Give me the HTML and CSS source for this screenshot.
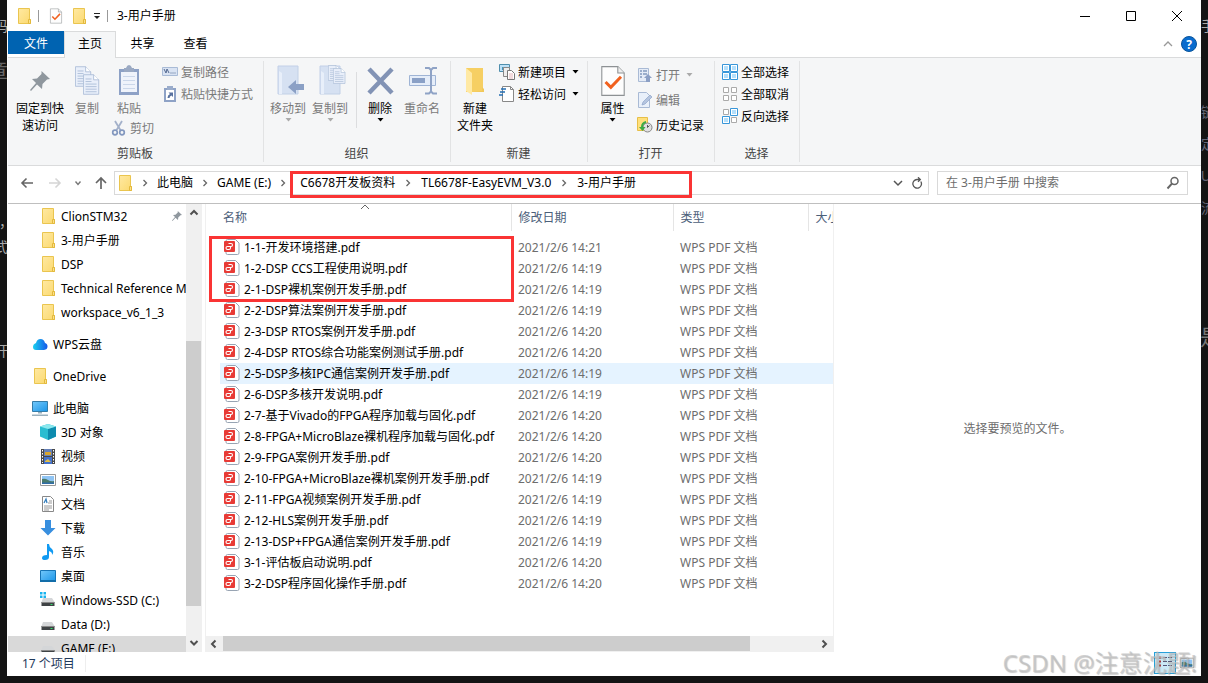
FILE: index.html
```html
<!DOCTYPE html>
<html lang="zh-CN">
<head>
<meta charset="utf-8">
<title>3-用户手册</title>
<link rel="stylesheet" href="styles.css">
</head>
<body>
<svg class="defs" aria-hidden="true">
  <defs>
    <linearGradient id="gf" x1="0" y1="0" x2="1" y2="1"><stop offset="0" stop-color="#ffe9a2"/><stop offset="1" stop-color="#fbd96f"/></linearGradient>
    <linearGradient id="gb" x1="0" y1="0" x2="1" y2="1"><stop offset="0" stop-color="#73c8fa"/><stop offset="1" stop-color="#1a95e8"/></linearGradient>
    <linearGradient id="gc" x1="0" y1="0" x2="1" y2="0"><stop offset="0" stop-color="#1ad0ee"/><stop offset="1" stop-color="#1557ea"/></linearGradient>
  </defs>
  <symbol id="folder" viewBox="0 0 16 16"><path d="M2.5.5h11v11h1v4h-12z" fill="url(#gf)" stroke="#eac54f"/><path d="M12.5 15.5v-4h2v4z" fill="#fbe08c" stroke="#e3b93c"/></symbol>
  <symbol id="pdf" viewBox="0 0 16 16"><path d="M3.500.5h8l3.500 3.500v10q0 1.500-1.500 1.500h-10q-1.500 0-1.500-1.500V2q0-1.500 1.500-1.500z" fill="#fff" stroke="#98a4b3"/><rect y="2" width="11" height="11" rx="1" fill="#e83b36"/><path d="M4.500 4.500H7q1.500 0 1.500 1.500T7 7.500H3.500q-1.500 0-1.500 1.500t1.500 1.500H5q1.500 0 1.500-1.500V7" fill="none" stroke="#fff" stroke-width="1.100"/></symbol>
  <symbol id="pin" viewBox="0 0 24 24"><path d="M13.500 2L22 10l-3 .5-4.500 4.500-.5 5-5-4.500L3 22l-1-1 6-7-4-4 5-.5L13.500 5z" fill="#8f979e"/></symbol>
  <symbol id="drive" viewBox="0 0 16 16"><path d="M3 6h9l2.500 4h-13z" fill="#d4d6d8"/><path d="M1.500 10h13v4h-13z" fill="#3f4345"/><path d="M1.500 10h13v1h-13z" fill="#888"/><path d="M10.500 12h2v1h-2z" fill="#35e06b"/></symbol>
  <symbol id="chev" viewBox="0 0 8 8"><path d="M2.500 1l3 3-3 3" fill="none" stroke="#666" stroke-width="1.300"/></symbol>
  <symbol id="tri" viewBox="0 0 7 4"><path d="M.5 0h6l-3 3.500z" fill="currentColor"/></symbol>
  <symbol id="doc" viewBox="0 0 20 24"><path d="M.5.5h12l6 6v17H.5z" fill="#e9effa" stroke="#a9bbd6"/><path d="M12.500.5v6h6" fill="#fff" stroke="#a9bbd6"/><path d="M3 5.500h7M3 8.500h7M3 11.500h13M3 14.500h13M3 17.500h13M3 20.500h13" stroke="#a9bbd6"/></symbol>
  <symbol id="check" viewBox="0 0 24 30"><path d="M1.500 1.500h15l6 6v21h-21z" fill="#fdfdfd" stroke="#8d9194"/><path d="M16.500 1.500v6h6" fill="#eee" stroke="#8d9194"/><path d="M5 16l5 5 9.500-10" fill="none" stroke="#f1611f" stroke-width="2.800"/></symbol>
  <symbol id="picture" viewBox="0 0 16 14"><path d="M.5 1.500h15v11H.5z" fill="#fff" stroke="#999"/><path d="M2 3h12v8H2z" fill="#8fc4f4"/><path d="M2 6q3-1 6 1t6 1v3H2z" fill="#4a7b6d"/><path d="M2 9.500h12V11H2z" fill="#2f6da8"/></symbol>
</svg>

<div class="backdrop" aria-hidden="true">
  <span class="bit b1">码</span><span class="bit b2">章</span><span class="bit b3">，</span><span class="bit b4">式</span><span class="bit b5">开</span>
  <span class="bit r1">手</span><span class="bit r2">链</span><span class="bit r3">定</span><span class="bit r4">U</span><span class="bit r5">流</span><span class="bit r6">是</span>
</div>

<div class="window">
  <header class="titlebar">
    <svg class="i16"><use href="#folder"/></svg>
    <span class="bar"></span>
    <svg class="i16"><use href="#check"/></svg>
    <svg class="i16 second"><use href="#folder"/></svg>
    <svg class="custom" viewBox="0 0 8 8"><path d="M1 1.500h6" stroke="#222"/><path d="M1 4h6L4 7z" fill="#222"/></svg>
    <span class="bar"></span>
    <h1 class="title">3-用户手册</h1>
    <div class="controls">
      <button aria-label="最小化"><svg viewBox="0 0 12 12"><path d="M1 6.500h10" stroke="#000"/></svg></button>
      <button aria-label="最大化"><svg viewBox="0 0 12 12"><path d="M1.500 1.500h9v9h-9z" stroke="#000" fill="none"/></svg></button>
      <button aria-label="关闭"><svg viewBox="0 0 12 12"><path d="M1 1l10 10M11 1L1 11" stroke="#000"/></svg></button>
    </div>
  </header>

  <nav class="tabs">
    <button class="tab file">文件</button>
    <button class="tab active">主页</button>
    <button class="tab">共享</button>
    <button class="tab">查看</button>
    <div class="tabs-end">
      <button aria-label="折叠功能区"><svg class="fold" viewBox="0 0 10 6"><path d="M1 5l4-4 4 4" fill="none" stroke="#999" stroke-width="1.300"/></svg></button>
      <button class="help" aria-label="帮助">?</button>
    </div>
  </nav>

  <section class="ribbon">
    <div class="group clip">
      <div class="tools">
        <button class="big pinbtn"><svg class="i32" viewBox="-4 -3 32 32"><use href="#pin" x="0" y="1" width="24" height="24"/></svg>固定到快<br>速访问</button>
        <button class="big off copy"><svg class="i32" viewBox="0 0 32 32"><use href="#doc" x="4" y="1" width="17" height="21"/><use href="#doc" x="12" y="9" width="17" height="21"/></svg>复制</button>
        <div class="pastecol">
          <button class="big off"><svg class="i32" viewBox="0 0 32 32"><path d="M6 4h20v26H6z" fill="#8da1c6"/><path d="M8 7h16v20H8z" fill="#eff3fb"/><path d="M10 11.500h12M10 15.500h12M10 19.500h12M10 23.500h12" stroke="#cbd7ea"/><path d="M11 3h2q1-3 3-3t3 3h2v4H11z" fill="#9aa9c3"/></svg>粘贴</button>
          <button class="small off"><svg class="i16" viewBox="0 0 16 16"><path d="M4 1l6 10M11 1L5 11" stroke="#a3b1ca" stroke-width="1.800"/><g fill="none" stroke="#8398bf" stroke-width="1.700"><circle cx="4" cy="12.500" r="2.300"/><circle cx="11" cy="12.500" r="2.300"/></g></svg>剪切</button>
        </div>
        <div class="stack s22">
          <button class="small off"><svg class="i16" viewBox="0 0 16 16"><path d="M.5 3.500h15v8H.5z" fill="#d9e3f3" stroke="#a9bbd6"/><path d="M2 5l2 4 1-4 2 4" fill="none" stroke="#53688f"/><path d="M8.500 9h1M10.500 9h1M12.500 9h1" stroke="#53688f"/></svg>复制路径</button>
          <button class="small off"><svg class="i16" viewBox="0 0 16 16"><path d="M2 2h12v14H2z" fill="#8ea2c6"/><path d="M4 4h8v10H4z" fill="#fff"/><path d="M5 0h6v4H5z" fill="#9aaccb"/><path d="M5.500 12q0-3 2.500-4L6.500 6.500H11V11L9.500 9.500Q7.500 10 7.500 12z" fill="#58719e"/></svg>粘贴快捷方式</button>
        </div>
      </div>
      <div class="caption">剪贴板</div>
    </div>
    <div class="group org">
      <div class="tools">
        <button class="big off"><svg class="i32" viewBox="0 0 32 32"><path d="M6 1h20v28H6z" fill="#d6e1f2" stroke="#c2d0e7"/><path d="M7 29V6l3 2v21z" fill="#e8effa"/><path d="M32 19v6h-8v4l-8-7 8-7v4z" fill="#8ba0c5"/></svg>移动到<svg class="tri"><use href="#tri"/></svg></button>
        <button class="big off"><svg class="i32" viewBox="0 0 32 32"><path d="M6 1h20v28H6z" fill="#d6e1f2" stroke="#c2d0e7"/><path d="M7 29V6l3 2v21z" fill="#e8effa"/><use href="#doc" x="14" y="0" width="13" height="16"/><use href="#doc" x="19" y="3" width="13" height="16"/></svg>复制到<svg class="tri"><use href="#tri"/></svg></button>
        <span class="rule"></span>
        <button class="big"><svg class="i32" viewBox="0 0 32 32"><path d="M5 4l23 24M28 4L5 28" stroke="#8293b5" stroke-width="4.500"/></svg>删除<svg class="tri"><use href="#tri"/></svg></button>
        <button class="big off"><svg class="i32" viewBox="0 0 32 32"><path d="M3.500 10.500h26v10h-26z" fill="#e5edf9" stroke="#9fb4d5"/><path d="M6 13h13v5H6z" fill="#8aa0c6"/><path d="M19 3h4l2 2 2-2h4M25 4v24M19 28.500h4l2-2 2 2h4" fill="none" stroke="#8fa3c6" stroke-width="2"/></svg>重命名</button>
      </div>
      <div class="caption">组织</div>
    </div>
    <div class="group new">
      <div class="tools">
        <button class="big"><svg class="i32" viewBox="0 0 32 32"><path d="M7 3h17v24H7z" fill="#f6cf63"/><path d="M7 3l6 5v22l-6-4z" fill="#ffe9a4"/><path d="M13 27h12v-3l-2-2v4z" fill="#f1c85a"/></svg>新建<br>文件夹</button>
        <div class="stack s22">
          <button class="small"><svg class="i16" viewBox="0 0 16 16"><path d="M.5.5h10v7H.5z" fill="#bce1f8" stroke="#4e8ead"/><path d="M3 3h4v3H3z" fill="#4194bc"/><path d="M4.500 3.500h6v9h-6z" fill="#eee" stroke="#888"/><path d="M8.500 6.500h4l3 3v6h-7z" fill="#fff" stroke="#777"/><path d="M10 10h4M10 12h4M10 14h4" stroke="#e4b5ba"/></svg>新建项目<svg class="tri side"><use href="#tri"/></svg></button>
          <button class="small"><svg class="i16" viewBox="0 0 16 16"><path d="M3.500.5h8l3 3v12h-11z" fill="#fff" stroke="#888"/><path d="M11.500.5v3h3" fill="none" stroke="#888"/><path d="M2 3h5M1 6h5M0 9h4" stroke="#246fb4" stroke-width="1.400"/></svg>轻松访问<svg class="tri side"><use href="#tri"/></svg></button>
        </div>
      </div>
      <div class="caption">新建</div>
    </div>
    <div class="group open">
      <div class="tools">
        <button class="big"><svg class="i32"><use href="#check"/></svg>属性<svg class="tri"><use href="#tri"/></svg></button>
        <div class="stack s25">
          <button class="small off"><svg class="i16" viewBox="0 0 16 16"><path d="M1.500 1.500h10v13h-10z" fill="#e5ecf7" stroke="#a9bad5"/><path d="M3 4h2M3 7h2M3 10h2M6 4h4M6 7h4" stroke="#849abf" stroke-width="1.500"/><path d="M11 7l4 4h-2v4H9v-4H7z" fill="#8ca0c5"/></svg>打开<svg class="tri side"><use href="#tri"/></svg></button>
          <button class="small off"><svg class="i16" viewBox="0 0 16 16"><path d="M1.500.5h8l3 3v12h-11z" fill="#e9f0fa" stroke="#a9bad5"/><path d="M5 13l1-3 7-7 2 2-7 7z" fill="#b5c5df" stroke="#8fa5ca" stroke-width=".7"/></svg>编辑</button>
          <button class="small"><svg class="i16" viewBox="0 0 16 16"><path d="M.5.5h10v13H.5z" fill="#ffe07c" stroke="#e7bf48"/><circle cx="10.500" cy="10.500" r="4.500" fill="#e1e1e1" stroke="#858585"/><path d="M10.500 10.500V8M10.500 10.500l2-2" fill="none" stroke="#555"/><path d="M9 4q-5 1-5 6H2l3.500 4 3-4H6q0-3 3-4z" fill="#3cab45"/></svg>历史记录</button>
        </div>
      </div>
      <div class="caption">打开</div>
    </div>
    <div class="group pick">
      <div class="tools">
        <div class="stack s22">
          <button class="small"><svg class="i16" viewBox="0 0 16 16"><path d="M.5.500h7v7h-7zM8.500.500h7v7h-7zM.5 8.500h7v7h-7zM8.500 8.500h7v7h-7z" fill="#fff" stroke="#3896d9"/><path d="M2 2h4v4H2zM10 2h4v4h-4zM2 10h4v4H2zM10 10h4v4h-4z" fill="#b4dffb"/></svg>全部选择</button>
          <button class="small"><svg class="i16" viewBox="0 0 16 16"><path d="M1.500 1.500h5v5h-5zM9.500 1.500h5v5h-5zM1.500 9.500h5v5h-5zM9.500 9.500h5v5h-5z" fill="#fff" stroke="#aaa"/></svg>全部取消</button>
          <button class="small"><svg class="i16" viewBox="0 0 16 16"><path d="M1.500 1.500h5v5h-5zM9.500 9.500h5v5h-5z" fill="#fff" stroke="#aaa"/><path d="M8.500.500h7v7h-7zM.5 8.500h7v7h-7z" fill="#fff" stroke="#3896d9"/><path d="M10 2h4v4h-4zM2 10h4v4H2z" fill="#b4dffb"/></svg>反向选择</button>
        </div>
      </div>
      <div class="caption">选择</div>
    </div>
  </section>

  <div class="addressbar">
    <div class="nav">
      <button aria-label="后退"><svg class="i14" viewBox="0 0 14 14"><path d="M13 7H2M6.500 2.500L2 7l4.500 4.500" fill="none" stroke="#666" stroke-width="1.600"/></svg></button>
      <button aria-label="前进"><svg class="i14" viewBox="0 0 14 14"><path d="M1 7h11M7.500 2.500L12 7l-4.500 4.500" fill="none" stroke="#d5d5d5" stroke-width="1.600"/></svg></button>
      <button aria-label="最近"><svg class="i8" viewBox="0 0 8 8"><path d="M1.500 2.500l2.500 3 2.500-3" fill="none" stroke="#777" stroke-width="1.400"/></svg></button>
      <button aria-label="向上"><svg class="i14" viewBox="0 0 14 14"><path d="M7 13V2M2 7l5-5 5 5" fill="none" stroke="#666" stroke-width="1.700"/></svg></button>
    </div>
    <div class="path">
      <svg class="i16"><use href="#folder"/></svg>
      <svg class="i8"><use href="#chev"/></svg><a href="#">此电脑</a>
      <svg class="i8"><use href="#chev"/></svg><a href="#">GAME (E:)</a>
      <svg class="i8"><use href="#chev"/></svg>
      <div class="trail"><a href="#">C6678开发板资料</a>
      <svg class="i8"><use href="#chev"/></svg><a href="#">TL6678F-EasyEVM_V3.0</a>
      <svg class="i8"><use href="#chev"/></svg><a href="#">3-用户手册</a><span class="mark mark-path"></span></div>
      <div class="path-end">
        <button aria-label="历史"><svg class="i10" viewBox="0 0 10 10"><path d="M1 3l4 4 4-4" fill="none" stroke="#555" stroke-width="1.500"/></svg></button>
        <button aria-label="刷新"><svg class="i12" viewBox="0 0 12 12"><path d="M9.800 4.500A4.300 4.300 0 1 1 6 2.500H9M7 .3l2.300 2.200L7 4.700" fill="none" stroke="#555" stroke-width="1.300"/></svg></button>
      </div>
    </div>
    <label class="search"><input type="text" placeholder="在 3-用户手册 中搜索" aria-label="搜索"><svg class="i14" viewBox="0 0 14 14"><circle cx="8.500" cy="5" r="3.500" fill="none" stroke="#666" stroke-width="1.500"/><path d="M6 7.500L1.500 12.500" stroke="#666" stroke-width="1.900"/></svg></label>
  </div>

  <main class="main">
    <aside class="tree">
      <ul class="nodes sub">
        <li><svg class="i16"><use href="#folder"/></svg>ClionSTM32<svg class="pinned"><use href="#pin"/></svg></li>
        <li><svg class="i16"><use href="#folder"/></svg>3-用户手册</li>
        <li><svg class="i16"><use href="#folder"/></svg>DSP</li>
        <li><svg class="i16"><use href="#folder"/></svg>Technical Reference Manual</li>
        <li><svg class="i16"><use href="#folder"/></svg>workspace_v6_1_3</li>
      </ul>
      <ul class="nodes"><li><svg class="i16" viewBox="0 0 16 16"><path d="M4 14q-3 0-3-3t3-4q1-4 4.500-4T13 7q2.500.5 2.500 3.500T12 14z" fill="url(#gc)"/></svg>WPS云盘</li></ul>
      <ul class="nodes"><li><svg class="i16"><use href="#folder"/></svg>OneDrive</li></ul>
      <ul class="nodes"><li><svg class="i16" viewBox="0 0 16 16"><path d="M.5 1.500h15v10H.5z" fill="url(#gb)" stroke="#347ca8"/><path d="M6 12h4v1.500H6zM0 14.500h16V16H0z" fill="#9ab0bd"/></svg>此电脑</li></ul>
      <ul class="nodes sub flush">
        <li><svg class="i16" viewBox="0 0 16 16"><path d="M8 0l8 2.500v10L8 16l-8-3.500v-10z" fill="#2abdd1"/><path d="M8 5l8-2.500v10L8 16z" fill="#0d8bae"/><path d="M8 0l8 2.500L8 5 0 2.500z" fill="#8be8ee"/></svg>3D 对象</li>
        <li><svg class="i16" viewBox="0 0 16 16"><path d="M1 1h14v15H1z" fill="#484848"/><path d="M4 1h8v7H4z" fill="#6681b8"/><path d="M4 9h8v7H4z" fill="#4372cc"/><path d="M5 4h6v3H5z" fill="#d9a62e"/><path d="M5 13l3-2 3 3H5z" fill="#e2bd48"/><path d="M2.500 2v13M13.500 2v13" stroke="#fff" stroke-dasharray="1.500 1.500"/></svg>视频</li>
        <li><svg class="i16"><use href="#picture"/></svg>图片</li>
        <li><svg class="i16" viewBox="0 0 16 16"><path d="M2.500.5h8l3 3v12h-11z" fill="#fff" stroke="#888"/><path d="M4 10h8M4 12h8M4 14h5M8 7h4M9 5h3" stroke="#999"/><path d="M4 7l2-4 1 4" fill="none" stroke="#3680be" stroke-width="1.300"/></svg>文档</li>
        <li><svg class="i16" viewBox="0 0 16 16"><path d="M5 0h6v8h4.500L8 15.500.5 8H5z" fill="#388fdf"/></svg>下载</li>
        <li><svg class="i16" viewBox="0 0 16 16"><path d="M7 0h2q0 3 3 5 2.500 3 0 6 .5-3-3-4v6q0 3-4 3-3 0-3-2 0-3 5-3z" fill="#119af2"/></svg>音乐</li>
        <li><svg class="i16" viewBox="0 0 16 16"><path d="M.5 2.500h15v11H.5z" fill="url(#gb)" stroke="#1674b5"/><path d="M0 12h16v2H0z" fill="#126da9"/></svg>桌面</li>
        <li><svg class="i16" viewBox="0 0 16 16"><use href="#drive" width="16" height="16"/><path d="M0 0h2.500v2.500H0zM3.500 0H6v2.500H3.500zM0 3.500h2.500V6H0zM3.500 3.500H6V6H3.500z" fill="#19b4ef"/></svg>Windows-SSD (C:)</li>
        <li><svg class="i16"><use href="#drive"/></svg>Data (D:)</li>
        <li class="current"><svg class="i16"><use href="#drive"/></svg>GAME (E:)</li>
      </ul>
    </aside>
    <div class="vscroll">
      <svg class="i10" viewBox="0 0 10 10"><path d="M1.500 6.500L5 3l3.500 3.500" fill="none" stroke="#505050" stroke-width="2"/></svg>
      <div class="vtrack"><span class="vthumb"></span></div>
      <svg class="i10" viewBox="0 0 10 10"><path d="M1.500 3L5 6.500 8.500 3" fill="none" stroke="#505050" stroke-width="2"/></svg>
    </div>

    <section class="files">
      <svg class="sort" viewBox="0 0 10 6"><path d="M1 5l4-4 4 4" fill="none" stroke="#666"/></svg>
      <div class="list">
        <table class="table">
          <colgroup><col class="c-name"><col class="c-date"><col class="c-type"><col></colgroup>
          <thead><tr><th>名称</th><th>修改日期</th><th>类型</th><th>大小</th></tr></thead>
          <tbody>
            <tr><td><svg class="i16"><use href="#pdf"/></svg>1-1-开发环境搭建.pdf</td><td>2021/2/6 14:21</td><td>WPS PDF 文档</td><td></td></tr>
            <tr><td><svg class="i16"><use href="#pdf"/></svg>1-2-DSP CCS工程使用说明.pdf</td><td>2021/2/6 14:19</td><td>WPS PDF 文档</td><td></td></tr>
            <tr><td><svg class="i16"><use href="#pdf"/></svg>2-1-DSP裸机案例开发手册.pdf</td><td>2021/2/6 14:19</td><td>WPS PDF 文档</td><td></td></tr>
            <tr><td><svg class="i16"><use href="#pdf"/></svg>2-2-DSP算法案例开发手册.pdf</td><td>2021/2/6 14:19</td><td>WPS PDF 文档</td><td></td></tr>
            <tr><td><svg class="i16"><use href="#pdf"/></svg>2-3-DSP RTOS案例开发手册.pdf</td><td>2021/2/6 14:20</td><td>WPS PDF 文档</td><td></td></tr>
            <tr><td><svg class="i16"><use href="#pdf"/></svg>2-4-DSP RTOS综合功能案例测试手册.pdf</td><td>2021/2/6 14:20</td><td>WPS PDF 文档</td><td></td></tr>
            <tr class="hover"><td><svg class="i16"><use href="#pdf"/></svg>2-5-DSP多核IPC通信案例开发手册.pdf</td><td>2021/2/6 14:19</td><td>WPS PDF 文档</td><td></td></tr>
            <tr><td><svg class="i16"><use href="#pdf"/></svg>2-6-DSP多核开发说明.pdf</td><td>2021/2/6 14:19</td><td>WPS PDF 文档</td><td></td></tr>
            <tr><td><svg class="i16"><use href="#pdf"/></svg>2-7-基于Vivado的FPGA程序加载与固化.pdf</td><td>2021/2/6 14:20</td><td>WPS PDF 文档</td><td></td></tr>
            <tr><td><svg class="i16"><use href="#pdf"/></svg>2-8-FPGA+MicroBlaze裸机程序加载与固化.pdf</td><td>2021/2/6 14:20</td><td>WPS PDF 文档</td><td></td></tr>
            <tr><td><svg class="i16"><use href="#pdf"/></svg>2-9-FPGA案例开发手册.pdf</td><td>2021/2/6 14:20</td><td>WPS PDF 文档</td><td></td></tr>
            <tr><td><svg class="i16"><use href="#pdf"/></svg>2-10-FPGA+MicroBlaze裸机案例开发手册.pdf</td><td>2021/2/6 14:19</td><td>WPS PDF 文档</td><td></td></tr>
            <tr><td><svg class="i16"><use href="#pdf"/></svg>2-11-FPGA视频案例开发手册.pdf</td><td>2021/2/6 14:19</td><td>WPS PDF 文档</td><td></td></tr>
            <tr><td><svg class="i16"><use href="#pdf"/></svg>2-12-HLS案例开发手册.pdf</td><td>2021/2/6 14:19</td><td>WPS PDF 文档</td><td></td></tr>
            <tr><td><svg class="i16"><use href="#pdf"/></svg>2-13-DSP+FPGA通信案例开发手册.pdf</td><td>2021/2/6 14:19</td><td>WPS PDF 文档</td><td></td></tr>
            <tr><td><svg class="i16"><use href="#pdf"/></svg>3-1-评估板启动说明.pdf</td><td>2021/2/6 14:20</td><td>WPS PDF 文档</td><td></td></tr>
            <tr><td><svg class="i16"><use href="#pdf"/></svg>3-2-DSP程序固化操作手册.pdf</td><td>2021/2/6 14:20</td><td>WPS PDF 文档</td><td></td></tr>
          </tbody>
        </table>
      </div>
      <div class="hscroll">
        <svg class="i10" viewBox="0 0 10 10"><path d="M6.500 1.500L3 5l3.500 3.500" fill="none" stroke="#505050" stroke-width="2"/></svg>
        <div class="htrack"><span class="hthumb"></span></div>
        <svg class="i10" viewBox="0 0 10 10"><path d="M3.500 1.500L7 5 3.500 8.500" fill="none" stroke="#505050" stroke-width="2"/></svg>
      </div>
      <span class="mark mark-files"></span>
    </section>

    <section class="preview">选择要预览的文件。</section>
  </main>

  <footer class="status">
    <span class="count">17 个项目</span>
    <div class="views">
      <button class="details" aria-label="详细信息"><svg class="i16" viewBox="0 0 16 16"><path d="M2 2.500h2M2 6.500h2M2 10.500h2" stroke="#a33" stroke-width="2"/><path d="M6 2.500h9M6 6.500h9M6 10.500h9" stroke="#557" stroke-dasharray="4 1"/></svg></button>
      <button aria-label="大图标"><svg class="i14"><use href="#picture"/></svg></button>
    </div>
    <span class="watermark">CSDN @注意沈题!</span>
  </footer>
</div>
</body>
</html>
```
FILE: styles.css
```css
* { box-sizing: border-box; }
html, body { height: 100%; }
body {
  margin: 0;
  padding: 0 7px 7px;
  overflow: hidden;
  background: #141414;
  font: 12px/17px "Noto Sans", "Noto Sans CJK SC", sans-serif;
  color: #000;
}
svg { display: block; flex: none; }
.defs { position: absolute; width: 0; height: 0; }
button { border: 0; padding: 0; background: none; font: inherit; color: inherit; display: flex; align-items: center; }
a { color: inherit; text-decoration: none; }
.i8 { width: 8px; height: 8px; }
.i10 { width: 10px; height: 10px; }
.i12 { width: 12px; height: 12px; }
.i14 { width: 14px; height: 14px; }
.i16 { width: 16px; height: 16px; }
.i32 { width: 32px; height: 32px; }

/* page behind the window */
.backdrop { position: absolute; inset: 0; overflow: hidden; color: #aaa; font-size: 14px; }
.bit { position: absolute; }
.b1 { left: -6px; top: 17px; }
.b2 { left: -14px; top: 62px; font-size: 22px; color: #666; }
.b3 { left: -1px; top: 213px; }
.b4 { left: -6px; top: 238px; }
.b5 { left: -6px; top: 342px; }
.r1 { right: -7px; top: 17px; }
.r2 { right: -7px; top: 103px; color: #667; }
.r3 { right: -7px; top: 135px; color: #667; }
.r4 { right: -3px; top: 167px; color: #667; }
.r5 { right: -7px; top: 199px; color: #667; }
.r6 { right: -14px; top: 328px; font-size: 22px; color: #777; }

.window { position: relative; height: 100%; display: flex; flex-direction: column; background: #fff; padding-left: 1px; }

.titlebar { display: flex; align-items: center; height: 31px; flex: none; padding-left: 8px; gap: 6px; }
.bar { width: 1px; height: 12px; background: #999; margin-right: 3px; }
.second { margin-left: 1px; }
.custom { width: 8px; height: 8px; }
.title { margin: 0; font: inherit; }
.controls { margin-left: auto; display: flex; padding-right: 1px; }
.controls button { width: 46px; height: 31px; justify-content: center; }
.controls svg { width: 12px; height: 12px; }

.tabs { display: flex; height: 26px; flex: none; }
.tab { width: 53px; justify-content: center; padding-bottom: 1px; }
.tab.file { width: 56px; height: 23px; padding: 1px 0 0; background: #0063b1; color: #fff; }
.tab.active { width: 52px; height: 27px; padding-bottom: 3px; background: #f5f6f7; border: 1px solid #dadbdc; border-bottom: 0; position: relative; z-index: 1; }
.tabs-end { margin-left: auto; display: flex; align-items: center; gap: 8px; padding-right: 4px; }
.fold { width: 10px; height: 6px; }
.help { width: 16px; height: 16px; border-radius: 50%; border: 1px solid #09549b; background: #0a6cce; color: #fff; font-weight: 700; justify-content: center; }

.ribbon { display: flex; flex: none; height: 109px; background: #f5f6f7; border: solid #dadbdc; border-width: 1px 0; }
.group { display: flex; flex-direction: column; position: relative; }
.group::after { content: ""; position: absolute; right: 0; top: 3px; bottom: 3px; width: 1px; background: #e2e3e4; }
.tools { display: flex; flex: 1; padding-top: 7px; }
.caption { text-align: center; height: 20px; padding-right: 2px; color: #444; }
.big { flex-direction: column; align-items: center; justify-content: flex-start; line-height: 17px; text-align: center; align-self: flex-start; }
.big .i32 { margin-bottom: 3px; }
.off { color: #7a7a7a; }
.tri { width: 7px; height: 4px; margin-top: 1px; }
.off .tri { color: #aaa; }
.small { gap: 3px; height: 20px; white-space: nowrap; }
.tri.side { margin: 0 0 0 3px; }
.stack { display: flex; flex-direction: column; }
.s22 { gap: 2px; margin-top: -3px; }
.s25 { gap: 5px; }
.clip { width: 256px; }
.clip .big { width: 36px; }
.clip .pinbtn { width: 64px; }
.clip .copy { margin-left: -3px; }
.pastecol { margin: 0 7px 0 6px; width: 44px; display: flex; flex-direction: column; gap: 1px; }
.org { width: 187px; }
.org .tools { padding-left: 3px; }
.org .big { width: 42px; }
.rule { width: 1px; height: 56px; background: #dcdddf; margin: 7px 2px 0 5px; }
.new { width: 137px; }
.new .big { width: 48px; }
.open { width: 127px; }
.open .big { width: 49px; }
.pick { width: 85px; }
.pick .tools { padding-left: 7px; }

.addressbar { display: flex; align-items: center; height: 38px; flex: none; padding: 0 13px 4px 12px; border-bottom: 1px solid #bfbfbf; }
.nav { display: flex; gap: 14px; width: 94px; align-items: center; }
.nav button:nth-child(n+3) { margin-left: -2px; }
.path { flex: 1; min-width: 0; display: flex; align-items: center; gap: 9px; height: 24px; border: 1px solid #d9d9d9; padding-left: 2px; }
.path, .path a { white-space: nowrap; }
.path .i8 { margin: 0 -1px; }
.trail { display: flex; align-items: center; gap: 10px; position: relative; margin-left: 5px; }
.path-end { margin-left: auto; display: flex; gap: 8px; padding-right: 5px; }
.search { display: flex; align-items: center; width: 251px; height: 24px; margin-left: 8px; border: 1px solid #d9d9d9; padding: 0 7px 0 8px; }
.search input { flex: 1; min-width: 0; border: 0; outline: 0; font: inherit; padding: 0; background: none; }
.search input::placeholder { color: #6d6d6d; opacity: 1; }
.mark { position: absolute; border: 3px solid #fa3434; pointer-events: none; z-index: 2; }
.mark-path { left: -10px; top: -3px; width: 402px; height: 27px; }
.mark-files { left: 3px; top: 32px; width: 305px; height: 66px; }

.main { flex: 1; min-height: 0; display: flex; }
.tree { width: 178px; flex: none; overflow: hidden; display: flex; flex-direction: column; gap: 8px; }
.nodes { list-style: none; margin: 0; padding: 0; flex: none; }
.nodes li { display: flex; align-items: center; gap: 5px; height: 24px; padding-left: 24px; white-space: nowrap; position: relative; }
.sub li { padding-left: 32px; }
.flush { margin-top: -8px; }
.current { background: #d9d9d9; }
.pinned { width: 12px; height: 12px; margin-left: auto; margin-right: 3px; }
.vscroll { width: 16px; flex: none; background: #f0f0f0; display: flex; flex-direction: column; align-items: center; padding: 4px 0; gap: 4px; }
.vtrack { flex: 1; align-self: stretch; display: flex; flex-direction: column; justify-content: flex-end; padding-bottom: 28px; margin-right: 1px; }
.vthumb { height: 69%; background: #cdcdcd; }

.files { width: 629px; flex: none; margin-left: 3px; border: solid #f0f0f0; border-width: 0 1px; position: relative; display: flex; flex-direction: column; }
.sort { position: absolute; left: 154px; top: 0; width: 10px; height: 6px; }
.list { flex: 1; min-height: 0; overflow: hidden; padding-left: 14px; }
.table { width: 100%; table-layout: fixed; border-collapse: collapse; white-space: nowrap; }
.c-name { width: 291px; }
.c-date { width: 162px; }
.c-type { width: 135px; }
.table th, .table td { padding: 0 0 0 7px; overflow: hidden; font-weight: 400; text-align: left; }
.table th { height: 27px; color: #4c607a; border-right: 1px solid #e5e5e5; }
.table th:first-child { padding-left: 3px; }
.table td:first-child { padding-left: 4px; }
.table th:last-child { border: 0; }
.table tbody::before { content: ""; display: table-row; height: 6px; }
.table td { height: 21px; color: #6d6d6d; }
.table td:first-child { color: #000; }
.table td .i16 { float: left; margin-right: 4px; }
.hover { background: #e5f3ff; }
.hscroll { height: 16px; flex: none; background: #f0f0f0; display: flex; align-items: center; padding: 0 4px 0 3px; gap: 4px; }
.htrack { flex: 1; height: 15px; align-self: flex-start; }
.hthumb { display: block; height: 100%; width: 89%; background: #cdcdcd; }

.preview { flex: 1; display: flex; align-items: center; justify-content: center; color: #6d6d6d; }

.status { display: flex; align-items: center; height: 24px; flex: none; position: relative; padding: 0 7px 2px 14px; }
.count { color: #1e395b; padding-right: 10px; border-right: 1px solid #eee; }
.views { margin-left: auto; display: flex; align-items: center; gap: 4px; }
.details { width: 22px; height: 22px; justify-content: center; border: 1px solid #26a0da; background: #cbe8f6; }
.watermark { position: absolute; right: 4px; top: -1px; font-size: 24px; line-height: 24px; color: rgba(190, 190, 190, .7); text-shadow: 1px 1px 1px rgba(120, 120, 120, .4); white-space: nowrap; }
```
